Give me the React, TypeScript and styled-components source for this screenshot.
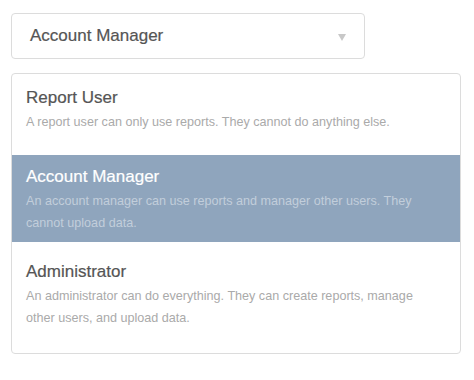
import React from "react";
import styled, { createGlobalStyle } from "styled-components";

const GlobalStyle = createGlobalStyle`
  body {
    margin: 0;
    background: #fff;
    font-family: "Liberation Sans", Arial, sans-serif;
  }
`;

const Page = styled.div`
  padding: 13px 13px 0 11px;
  display: flex;
  flex-direction: column;
  gap: 14px;
`;

const Select = styled.div`
  width: 354px;
  height: 46px;
  box-sizing: border-box;
  border: 1px solid #dcdcdc;
  border-radius: 4px;
  display: flex;
  align-items: center;
  justify-content: space-between;
  padding: 0 18px 0 18px;
  font-size: 17px;
  color: #555;
  -webkit-text-stroke: 0.2px #555;
`;

const Arrow = styled.span`
  width: 0;
  height: 0;
  border-left: 4px solid transparent;
  border-right: 4px solid transparent;
  border-top: 7px solid #c8c8c8;
  margin-top: 2px;
`;

const Menu = styled.div`
  width: 450px;
  box-sizing: border-box;
  border: 1px solid #dcdcdc;
  border-radius: 4px;
  padding: 0 0 2px;
  display: flex;
  flex-direction: column;
`;

const Option = styled.div<{ $active?: boolean }>`
  padding: ${(p) => (p.$active ? "12px 30px 8px 14px" : "20px 30px 22px 14px")};
  background: ${(p) => (p.$active ? "#8fa5bd" : "transparent")};

  &:first-child {
    padding-top: 14px;
  }
`;

const Title = styled.div<{ $active?: boolean }>`
  font-size: 17px;
  line-height: 20px;
  color: ${(p) => (p.$active ? "#fff" : "#555")};
  -webkit-text-stroke: 0.2px ${(p) => (p.$active ? "#fff" : "#555")};
`;

const Desc = styled.div<{ $active?: boolean }>`
  margin-top: 3px;
  font-size: 12.6px;
  line-height: 22px;
  color: ${(p) => (p.$active ? "#c2cedb" : "#aaa")};
`;

const roles = [
  {
    title: "Report User",
    desc: "A report user can only use reports. They cannot do anything else."
  },
  {
    title: "Account Manager",
    desc: "An account manager can use reports and manager other users. They cannot upload data."
  },
  {
    title: "Administrator",
    desc: "An administrator can do everything. They can create reports, manage other users, and upload data."
  }
];

const App: React.FC = () => {
  const selected = "Account Manager";
  return (
    <>
      <GlobalStyle />
      <Page>
        <Select>
          {selected}
          <Arrow />
        </Select>
        <Menu>
          {roles.map((role) => {
            const active = role.title === selected;
            return (
              <Option key={role.title} $active={active}>
                <Title $active={active}>{role.title}</Title>
                <Desc $active={active}>{role.desc}</Desc>
              </Option>
            );
          })}
        </Menu>
      </Page>
    </>
  );
};

export default App;
